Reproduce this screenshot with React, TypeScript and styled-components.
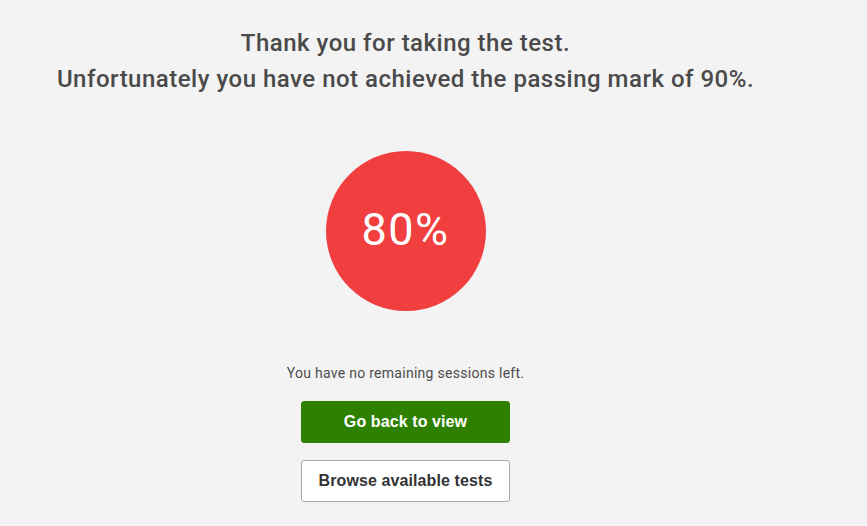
import React from "react";
import styled, { createGlobalStyle } from "styled-components";

const GlobalStyle = createGlobalStyle`
  html, body {
    margin: 0;
    padding: 0;
    background: #f3f3f3;
  }
  body {
    font-family: Roboto, "Liberation Sans", sans-serif;
  }
`;

const Page = styled.div`
  width: 811px;
  display: flex;
  flex-direction: column;
  align-items: center;
  padding-top: 25px;
`;

const Title = styled.h1`
  margin: 0;
  font-weight: 500;
  font-size: 24px;
  line-height: 36px;
  letter-spacing: 0.5px;
  color: #4a4a4a;
  text-align: center;
`;

const ScoreCircle = styled.div<{ $passed: boolean }>`
  width: 160px;
  height: 160px;
  border-radius: 50%;
  margin-top: 54px;
  background: ${(p) => (p.$passed ? "#2e8100" : "#f13e3f")};
  color: #ffffff;
  display: flex;
  align-items: center;
  justify-content: center;
  padding-bottom: 4px;
  box-sizing: border-box;
  font-size: 45px;
  font-weight: 400;
  letter-spacing: 1.5px;
`;

const Note = styled.p`
  margin: 52px 0 0;
  font-size: 14px;
  line-height: 20px;
  letter-spacing: 0.28px;
  color: #4d4d4d;
`;

const Button = styled.button<{ $primary?: boolean }>`
  width: 209px;
  height: 42px;
  border-radius: 3px;
  font-family: "Liberation Sans", Arial, sans-serif;
  font-weight: 700;
  font-size: 16px;
  letter-spacing: 0.1px;
  cursor: pointer;
  margin-top: ${(p) => (p.$primary ? "18px" : "17px")};
  background: ${(p) => (p.$primary ? "#2e8100" : "#ffffff")};
  color: ${(p) => (p.$primary ? "#ffffff" : "#333333")};
  border: 1px solid ${(p) => (p.$primary ? "#2e8100" : "#a9a9a9")};
`;

const score = 80;
const passMark = 90;

export default function App() {
  return (
    <>
      <GlobalStyle />
      <Page>
        <Title>Thank you for taking the test.</Title>
        <Title>
          Unfortunately you have not achieved the passing mark of {passMark}%.
        </Title>
        <ScoreCircle $passed={score >= passMark}>{score}%</ScoreCircle>
        <Note>You have no remaining sessions left.</Note>
        <Button $primary>Go back to view</Button>
        <Button>Browse available tests</Button>
      </Page>
    </>
  );
}
